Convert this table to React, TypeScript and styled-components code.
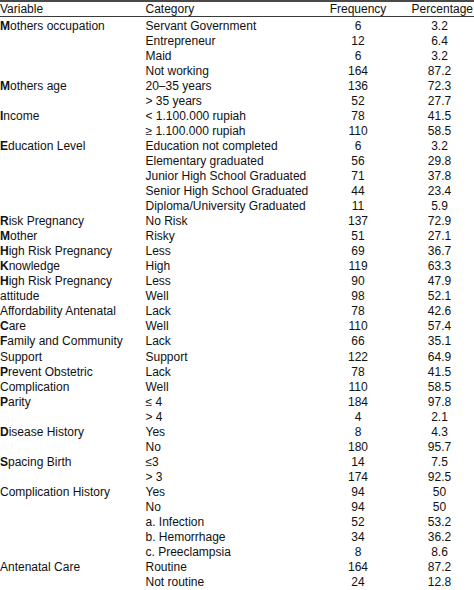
import React from "react";
import styled, { createGlobalStyle } from "styled-components";

const GlobalStyle = createGlobalStyle`
  html, body {
    margin: 0;
    padding: 0;
    background: #ffffff;
  }
  body {
    font-family: "Liberation Sans", Arial, sans-serif;
    color: #111111;
    overflow: hidden;
  }
`;

const Table = styled.div`
  width: 474px;
  font-size: 12px;
  border-top: 2px solid #4a4a4a;
`;

const Body = styled.div`
  padding-top: 1.5px;
`;

const Row = styled.div<{ $head?: boolean }>`
  display: grid;
  grid-template-columns: 145.5px 174.5px 76px 78px;
  height: ${(p) => (p.$head ? "14px" : "15.05px")};
  line-height: ${(p) => (p.$head ? "14px" : "15.05px")};
  border-bottom: ${(p) => (p.$head ? "1px solid #3a3a3a" : "none")};
  white-space: nowrap;
`;

const Cell = styled.div`
  text-align: left;
  overflow: visible;
`;

const FreqCell = styled(Cell)`
  text-align: center;
`;

const PctCell = styled(Cell)`
  text-align: center;
  padding-left: 9px;
`;

const PctHead = styled(Cell)`
  text-align: right;
  padding-right: 1px;
`;

const Lead = styled.span`
  font-weight: bold;
`;

type Item = {
  v?: string;
  bold?: boolean;
  c: string;
  f: string;
  p: string;
};

const rows: Item[] = [
  { v: "Mothers occupation", bold: true, c: "Servant Government", f: "6", p: "3.2" },
  { c: "Entrepreneur", f: "12", p: "6.4" },
  { c: "Maid", f: "6", p: "3.2" },
  { c: "Not working", f: "164", p: "87.2" },
  { v: "Mothers age", bold: true, c: "20–35 years", f: "136", p: "72.3" },
  { c: "> 35 years", f: "52", p: "27.7" },
  { v: "Income", bold: true, c: "< 1.100.000 rupiah", f: "78", p: "41.5" },
  { c: "≥ 1.100.000 rupiah", f: "110", p: "58.5" },
  { v: "Education Level", bold: true, c: "Education not completed", f: "6", p: "3.2" },
  { c: "Elementary graduated", f: "56", p: "29.8" },
  { c: "Junior High School Graduated", f: "71", p: "37.8" },
  { c: "Senior High School Graduated", f: "44", p: "23.4" },
  { c: "Diploma/University Graduated", f: "11", p: "5.9" },
  { v: "Risk Pregnancy", bold: true, c: "No Risk", f: "137", p: "72.9" },
  { v: "Mother", bold: true, c: "Risky", f: "51", p: "27.1" },
  { v: "High Risk Pregnancy", bold: true, c: "Less", f: "69", p: "36.7" },
  { v: "Knowledge", bold: true, c: "High", f: "119", p: "63.3" },
  { v: "High Risk Pregnancy", bold: true, c: "Less", f: "90", p: "47.9" },
  { v: "attitude", c: "Well", f: "98", p: "52.1" },
  { v: "Affordability Antenatal", c: "Lack", f: "78", p: "42.6" },
  { v: "Care", bold: true, c: "Well", f: "110", p: "57.4" },
  { v: "Family and Community", bold: true, c: "Lack", f: "66", p: "35.1" },
  { v: "Support", c: "Support", f: "122", p: "64.9" },
  { v: "Prevent Obstetric", bold: true, c: "Lack", f: "78", p: "41.5" },
  { v: "Complication", c: "Well", f: "110", p: "58.5" },
  { v: "Parity", bold: true, c: "≤ 4", f: "184", p: "97.8" },
  { c: "> 4", f: "4", p: "2.1" },
  { v: "Disease History", bold: true, c: "Yes", f: "8", p: "4.3" },
  { c: "No", f: "180", p: "95.7" },
  { v: "Spacing Birth", bold: true, c: "≤3", f: "14", p: "7.5" },
  { c: "> 3", f: "174", p: "92.5" },
  { v: "Complication History", c: "Yes", f: "94", p: "50" },
  { c: "No", f: "94", p: "50" },
  { c: "a. Infection", f: "52", p: "53.2" },
  { c: "b. Hemorrhage", f: "34", p: "36.2" },
  { c: "c. Preeclampsia", f: "8", p: "8.6" },
  { v: "Antenatal Care", c: "Routine", f: "164", p: "87.2" },
  { c: "Not routine", f: "24", p: "12.8" },
];

const Label: React.FC<{ text?: string; bold?: boolean }> = ({ text, bold }) => {
  if (!text) return <Cell />;
  if (!bold) return <Cell>{text}</Cell>;
  return (
    <Cell>
      <Lead>{text.charAt(0)}</Lead>
      {text.slice(1)}
    </Cell>
  );
};

export default function App() {
  return (
    <>
      <GlobalStyle />
      <Table>
        <Row $head>
          <Cell>Variable</Cell>
          <Cell>Category</Cell>
          <FreqCell>Frequency</FreqCell>
          <PctHead>Percentage</PctHead>
        </Row>
        <Body>
          {rows.map((r, i) => (
            <Row key={i}>
              <Label text={r.v} bold={r.bold} />
              <Cell>{r.c}</Cell>
              <FreqCell>{r.f}</FreqCell>
              <PctCell>{r.p}</PctCell>
            </Row>
          ))}
        </Body>
      </Table>
    </>
  );
}
